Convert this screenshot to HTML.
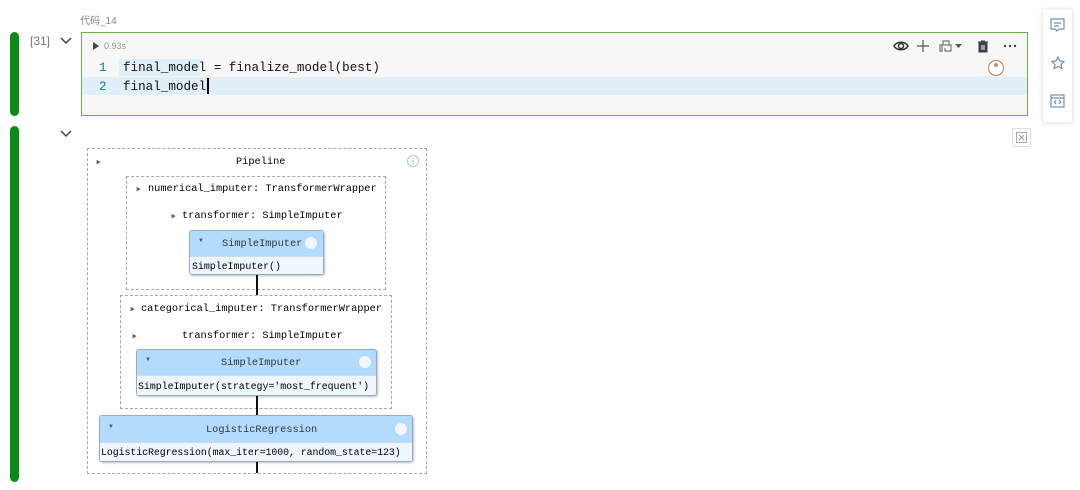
<!DOCTYPE html>
<html><head><meta charset="utf-8"><style>
*{margin:0;padding:0;box-sizing:border-box}
body{width:1080px;height:490px;background:#fff;position:relative;overflow:hidden;font-family:"Liberation Sans","Noto Sans CJK SC",sans-serif}
.a{position:absolute}
.mono{font-family:"Liberation Mono","Noto Sans CJK SC",monospace;white-space:pre}
.ser{font-family:"Liberation Mono","Noto Serif CJK SC",monospace;white-space:pre;font-size:10.3px;color:#000}
.dash{border:1px dashed #a8a8a8}
.est{border:1px solid #9ab;border-radius:3px;box-shadow:1px 1px 2px rgba(0,0,0,.25);overflow:hidden}
.hd{background:#b3dbfd;position:relative;text-align:center}
.bd{background:#eef6fe;border-top:1px solid #cde;font-size:9.9px!important}
.q{position:absolute;width:12px;height:12px;border-radius:50%;background:#f0f7ff;top:6px}
.vl{position:absolute;width:2px;background:#111;left:256px}
.tri{position:absolute;font-size:5px;color:#666}
</style></head><body>
<div class="a" style="left:80px;top:12px;font-size:10px;color:#888">代码_14</div>
<div class="a" style="left:10px;top:32px;width:9px;height:84px;background:#0b8a1a;border-radius:5px"></div>
<div class="a" style="left:10px;top:126px;width:9px;height:356px;background:#0b8a1a;border-radius:5px"></div>
<div class="a" style="left:30px;top:34px;font-size:12px;color:#777">[31]</div>
<svg class="a" style="left:60px;top:37px" width="12" height="8"><path d="M1 1l5 5 5-5" stroke="#444" stroke-width="1.5" fill="none"/></svg>
<svg class="a" style="left:60px;top:130px" width="12" height="8"><path d="M1 1l5 5 5-5" stroke="#444" stroke-width="1.5" fill="none"/></svg>
<div class="a" style="left:81px;top:32px;width:947px;height:84px;border:1px solid #6ab04c;background:#f7f7f7"></div>
<div class="a" style="left:82px;top:77px;width:945px;height:18px;background:#e1eff8"></div>
<div class="a" style="left:119px;top:59px;width:81px;height:17px;background:#e1eff8"></div>
<svg class="a" style="left:92px;top:41px" width="8" height="10"><path d="M1 1v8l6-4z" fill="#444"/></svg>
<div class="a" style="left:104px;top:41px;font-size:9px;color:#999">0.93s</div>
<div class="a mono" style="left:99px;top:59px;font-size:12.6px;color:#237893;line-height:19px">1
2</div>
<div class="a mono" style="left:123px;top:59px;font-size:12.6px;color:#111;line-height:19px">final_model = finalize_model(best)
final_model</div>
<div class="a" style="left:207px;top:78px;width:1.5px;height:16px;background:#000"></div>
<svg class="a" style="left:892px;top:38px" width="130" height="16">
<path d="M2 8c3-5 11-5 14 0c-3 5-11 5-14 0z" fill="none" stroke="#333" stroke-width="1.5"/><circle cx="9" cy="8" r="2.5" fill="none" stroke="#333" stroke-width="1.5"/>
<path d="M31 2v12M25 8h12" stroke="#555" stroke-width="1.2"/>
<path d="M51 3h6v4h-7v6h-2v-6h3zM56 7h3v6h-6v-3" fill="none" stroke="#777" stroke-width="1.2"/>
<path d="M63 6h7l-3.5 4z" fill="#555"/>
<path d="M86 4h10M89 3h4M87 5h8v9h-8z" fill="#3c3f4a" stroke="#3c3f4a" stroke-width="1"/><path d="M90 7v5M92 7v5" stroke="#fff"/>
<circle cx="113" cy="8" r="1.2" fill="#444"/><circle cx="118" cy="8" r="1.2" fill="#444"/><circle cx="123" cy="8" r="1.2" fill="#444"/>
</svg>
<svg class="a" style="left:987px;top:59px" width="18" height="18"><circle cx="9" cy="9" r="7.5" fill="#fff" stroke="#c98d6a" stroke-width="1.2"/><circle cx="9" cy="6" r="2" fill="#c98d6a"/></svg>
<div class="a" style="left:1042px;top:8px;width:31px;height:115px;background:#fff;border:1px solid #eee;box-shadow:0 1px 4px rgba(0,0,0,.1);border-radius:2px"></div>
<svg class="a" style="left:1049px;top:17px" width="18" height="100" fill="none" stroke="#6f8fb3" stroke-width="1.2">
<path d="M2 2h13v10h-5l-2 2-2-2h-4z"/><path d="M5 6h7M5 9h5"/>
<path d="M9 40l2 4 4 .5-3 3 1 4-4-2-4 2 1-4-3-3 4-.5z"/>
<rect x="2" y="78" width="13" height="12"/><path d="M2 81h13M7 83l-1.5 2 1.5 2M10 83l1.5 2-1.5 2"/>
</svg>
<div class="a" style="left:1012px;top:128px;width:19px;height:19px;border:1px solid #ddd;border-radius:2px"></div>
<svg class="a" style="left:1016px;top:132px" width="11" height="11"><rect x=".5" y=".5" width="10" height="10" fill="none" stroke="#aaa"/><path d="M3 3l5 5M8 3l-5 5" stroke="#999"/></svg>
<div class="a dash" style="left:87px;top:148px;width:340px;height:326px"></div>
<div class="tri" style="left:96px;top:159px">▶</div>
<div class="a ser" style="left:236px;top:156px">Pipeline</div>
<svg class="a" style="left:406px;top:154px" width="14" height="14"><circle cx="7" cy="7" r="5.5" fill="#fff" stroke="#9cc9f3"/><path d="M7 6v4M7 4v1" stroke="#9cc9f3" stroke-width="1.2"/></svg>
<div class="a dash" style="left:126px;top:176px;width:260px;height:114px"></div>
<div class="tri" style="left:136px;top:186px">▶</div>
<div class="a ser" style="left:148px;top:183px">numerical_imputer: TransformerWrapper</div>
<div class="tri" style="left:171px;top:213px">▶</div>
<div class="a ser" style="left:182px;top:210px">transformer: SimpleImputer</div>
<div class="a est" style="left:189px;top:230px;width:135px;height:45px">
<div class="hd" style="height:25px"><span class="a" style="left:8px;top:7px;font-size:6px;color:#556">▼</span><span class="ser" style="position:absolute;left:32px;top:7px;color:#334">SimpleImputer</span><div class="q" style="left:115px"></div></div>
<div class="bd ser" style="height:20px;padding:4px 2px">SimpleImputer()</div></div>
<div class="vl" style="top:275px;height:20px"></div>
<div class="a dash" style="left:120px;top:295px;width:272px;height:114px"></div>
<div class="tri" style="left:130px;top:306px">▶</div>
<div class="a ser" style="left:141px;top:303px">categorical_imputer: TransformerWrapper</div>
<div class="tri" style="left:132px;top:333px">▶</div>
<div class="a ser" style="left:182px;top:330px">transformer: SimpleImputer</div>
<div class="a est" style="left:136px;top:349px;width:241px;height:47px">
<div class="hd" style="height:25px"><span class="a" style="left:8px;top:7px;font-size:6px;color:#556">▼</span><span class="ser" style="position:absolute;left:84px;top:7px;color:#334">SimpleImputer</span><div class="q" style="left:222px"></div></div>
<div class="bd ser" style="height:22px;padding:5px 1px">SimpleImputer(strategy='most_frequent')</div></div>
<div class="vl" style="top:396px;height:19px"></div>
<div class="a est" style="left:99px;top:415px;width:314px;height:47px">
<div class="hd" style="height:26px"><span class="a" style="left:8px;top:8px;font-size:6px;color:#556">▼</span><span class="ser" style="position:absolute;left:106px;top:8px;color:#334">LogisticRegression</span><div class="q" style="left:295px;top:7px"></div></div>
<div class="bd ser" style="height:21px;padding:4px 1px;letter-spacing:-0.05px">LogisticRegression(max_iter=1000, random_state=123)</div></div>
<div class="vl" style="top:462px;height:11px"></div>
</body></html>
